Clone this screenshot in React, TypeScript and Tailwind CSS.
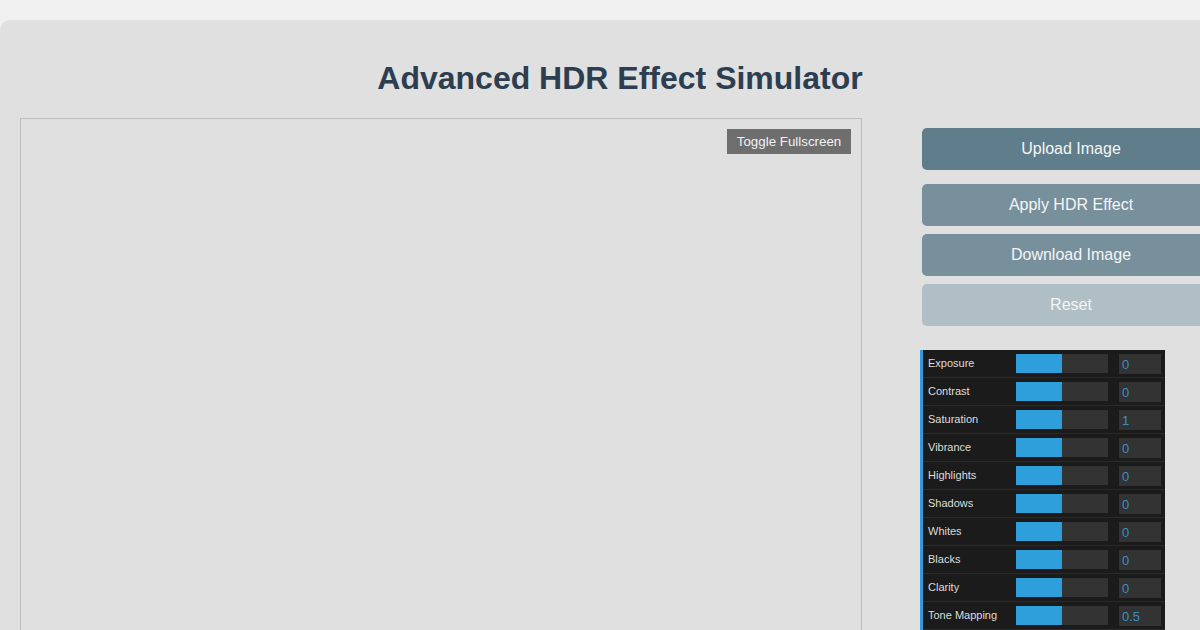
import React from "react";

const sliders: { label: string; value: string }[] = [
  { label: "Exposure", value: "0" },
  { label: "Contrast", value: "0" },
  { label: "Saturation", value: "1" },
  { label: "Vibrance", value: "0" },
  { label: "Highlights", value: "0" },
  { label: "Shadows", value: "0" },
  { label: "Whites", value: "0" },
  { label: "Blacks", value: "0" },
  { label: "Clarity", value: "0" },
  { label: "Tone Mapping", value: "0.5" },
];

export default function App() {
  return (
    <div
      className="w-[1200px] h-[630px] overflow-hidden bg-[#f0f0f0] pt-[20px]"
      style={{ fontFamily: '"Liberation Sans", Arial, sans-serif' }}
    >
      <div className="w-[1240px] bg-[#e0e0e0] rounded-tl-[10px] rounded-tr-[10px] px-[20px] pt-[40px] pb-[20px] min-h-[700px]">
        <h1 className="text-center text-[32px] leading-[37px] font-bold text-[#2c3e50] mb-[21px]">
          Advanced HDR Effect Simulator
        </h1>
        <div className="flex">
          <div className="relative w-[842px] h-[600px] border border-[#bdbdbd] shrink-0">
            <button className="absolute top-[10px] right-[10px] h-[25px] w-[124px] bg-[#6e6e6e] text-[#f2f2f2] text-[13.33px] flex items-center justify-center">
              Toggle Fullscreen
            </button>
          </div>
          <div className="ml-[58px] w-[300px] flex flex-col pt-[10px]">
            <button className="ml-[2px] h-[42px] rounded-[5px] bg-[#607d8b] text-[#f5f5f5] text-[16px]">
              Upload Image
            </button>
            <button className="ml-[2px] mt-[14px] h-[42px] rounded-[5px] bg-[#78909c] text-[#f5f5f5] text-[16px]">
              Apply HDR Effect
            </button>
            <button className="ml-[2px] mt-[8px] h-[42px] rounded-[5px] bg-[#78909c] text-[#f5f5f5] text-[16px]">
              Download Image
            </button>
            <button className="ml-[2px] mt-[8px] h-[42px] rounded-[5px] bg-[#b0bec5] text-[#f5f5f5] text-[16px]">
              Reset
            </button>
            <div className="mt-[24px] w-[245px] bg-[#1b1b1b] border-l-[3px] border-[#3498db]">
              {sliders.map((s) => (
                <div
                  key={s.label}
                  className="h-[28px] flex items-start border-b border-[#2a2a2a]"
                >
                  <div className="w-[93px] pl-[5px] pt-[7px] text-[11px] leading-[13px] text-[#dddddd]">
                    {s.label}
                  </div>
                  <div className="mt-[4px] w-[92px] h-[19px] bg-[#333333] flex">
                    <div className="w-[46px] h-full bg-[#2e9fdb]" />
                  </div>
                  <div className="ml-[11px] mt-[4px] w-[42px] h-[20px] bg-[#333333] text-[#3a8fc4] text-[13px] leading-[20px] pl-[3px] pt-[1px]">
                    {s.value}
                  </div>
                </div>
              ))}
            </div>
          </div>
        </div>
      </div>
    </div>
  );
}
